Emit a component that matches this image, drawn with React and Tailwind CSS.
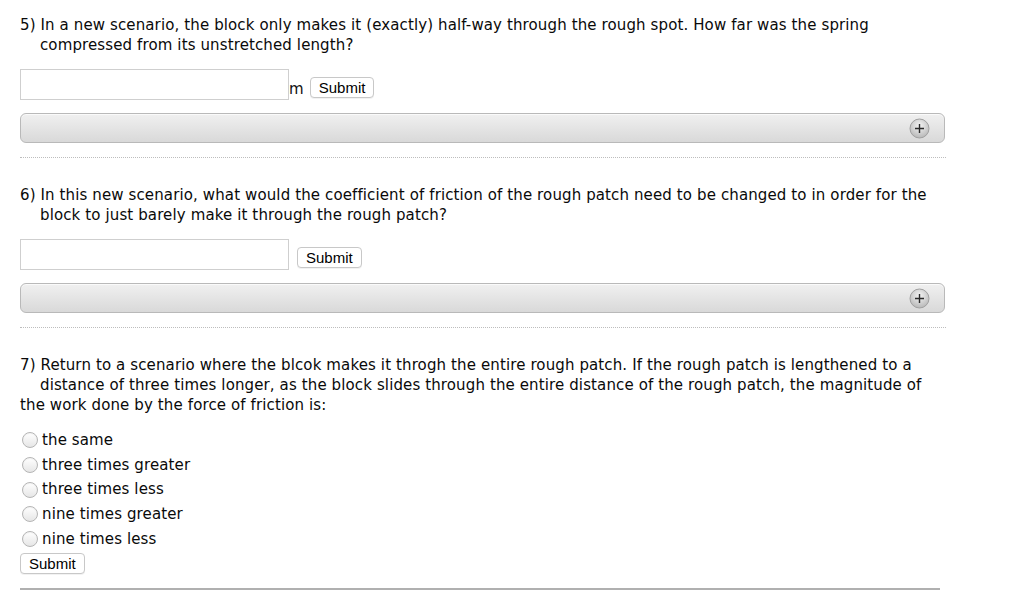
import { useState } from 'react';

const QFONT = { fontFamily: '"DejaVu Sans", Verdana, sans-serif', letterSpacing: '0.12px' };

const SubmitButton = ({ className = '' }) => (
  <button
    type="button"
    className={`h-[21px] px-[8px] rounded-[4px] border border-[#c8c8c8] bg-white text-[15px] leading-none text-black font-['Liberation_Sans',Arial,sans-serif] shadow-[0_1px_0_rgba(0,0,0,0.05)] ${className}`}
  >
    Submit
  </button>
);

const PlusCircle = () => (
  <svg width="21" height="21" viewBox="0 0 21 21" className="shrink-0">
    <defs>
      <radialGradient id="pc" cx="50%" cy="35%" r="65%">
        <stop offset="0%" stopColor="#f4f4f4" />
        <stop offset="100%" stopColor="#b8b8b8" />
      </radialGradient>
    </defs>
    <circle cx="10.5" cy="10.5" r="9.5" fill="url(#pc)" stroke="#a0a0a0" strokeWidth="1" />
    <path d="M10.5 6v9M6 10.5h9" stroke="#2a2a2a" strokeWidth="1.4" />
  </svg>
);

const HintBar = () => (
  <div className="mt-[13px] h-[30px] w-[925px] rounded-[6px] border border-[#b9b9b9] bg-gradient-to-b from-[#f0f0f0] to-[#d9d9d9] flex items-center justify-end pr-[14px] shadow-[inset_0_1px_0_#fafafa]">
    <PlusCircle />
  </div>
);

const Dotted = () => (
  <div className="mt-[14px] w-[926px] border-t border-dotted border-[#bdbdbd]" />
);

const AnswerRow = ({ unit }) => {
  const [value, setValue] = useState('');
  return (
    <div className="mt-[14px] flex items-end">
      <input
        value={value}
        onChange={(e) => setValue(e.target.value)}
        className="h-[31px] w-[269px] border border-[#cfcfcf] bg-white outline-none"
      />
      {unit && <span className="mb-[3px] text-[15px] leading-none text-[#111]" style={QFONT}>{unit}</span>}
      <SubmitButton className={unit ? 'ml-[6px] mb-[2px]' : 'ml-[8px] mb-[2px]'} />
    </div>
  );
};

const Question = ({ first, rest }) => (
  <div className="text-[15px] leading-[20px] text-[#0a0a0a] whitespace-nowrap" style={QFONT}>
    <div>{first}</div>
    {rest.map((line) => (
      <div key={line.text} className={line.flush ? '' : 'pl-[20px]'}>{line.text}</div>
    ))}
  </div>
);

const OPTIONS = ['the same', 'three times greater', 'three times less', 'nine times greater', 'nine times less'];

const Radio = ({ checked, onClick }) => (
  <span
    onClick={onClick}
    className="h-[16px] w-[16px] rounded-full border border-[#b5b5b5] bg-gradient-to-b from-white to-[#e6e6e6] shadow-[inset_0_1px_1px_rgba(0,0,0,0.05)] shrink-0 flex items-center justify-center"
  >
    {checked && <span className="h-[6px] w-[6px] rounded-full bg-[#333]" />}
  </span>
);

export default function App() {
  const [choice, setChoice] = useState(null);

  return (
    <div className="w-[1024px] h-[590px] overflow-hidden bg-white pl-[20px] pt-[15px]">
      <Question
        first="5) In a new scenario, the block only makes it (exactly) half-way through the rough spot. How far was the spring"
        rest={[{ text: 'compressed from its unstretched length?' }]}
      />
      <AnswerRow unit="m" />
      <HintBar />
      <Dotted />

      <div className="mt-[27px]">
        <Question
          first="6) In this new scenario, what would the coefficient of friction of the rough patch need to be changed to in order for the"
          rest={[{ text: 'block to just barely make it through the rough patch?' }]}
        />
      </div>
      <AnswerRow />
      <HintBar />
      <Dotted />

      <div className="mt-[27px]">
        <Question
          first="7) Return to a scenario where the blcok makes it throgh the entire rough patch. If the rough patch is lengthened to a"
          rest={[
            { text: 'distance of three times longer, as the block slides through the entire distance of the rough patch, the magnitude of' },
            { text: 'the work done by the force of friction is:', flush: true },
          ]}
        />
      </div>

      <div className="mt-[13px] flex flex-col">
        {OPTIONS.map((opt, i) => (
          <label key={opt} className="h-[24.7px] flex items-center gap-[4px] pl-[2px] text-[15px] text-[#0a0a0a] cursor-default" style={QFONT}>
            <Radio checked={choice === i} onClick={() => setChoice(i)} />
            <span>{opt}</span>
          </label>
        ))}
      </div>
      <SubmitButton />
      <div className="mt-[13px] w-[920px] h-[2px] bg-[#b0b0b0]" />
    </div>
  );
}
